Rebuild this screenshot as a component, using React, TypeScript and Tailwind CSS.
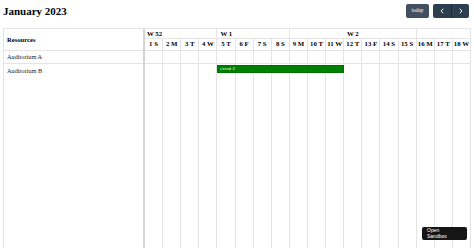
import { ChevronLeft, ChevronRight } from "lucide-react";

const days = [
  "1 S", "2 M", "3 T", "4 W", "5 T", "6 F", "7 S", "8 S", "9 M",
  "10 T", "11 W", "12 T", "13 F", "14 S", "15 S", "16 M", "17 T", "18 W",
];

function DayCells() {
  return (
    <div className="absolute inset-0 grid grid-cols-[repeat(18,minmax(0,1fr))]">
      {days.map((d) => (
        <div key={d} className="border-r border-[#e4e4e4]" />
      ))}
    </div>
  );
}

export default function App() {
  return (
    <div className="relative w-[474px] h-[248px] overflow-hidden bg-white flex flex-col font-['Liberation_Serif',serif] text-black">
      {/* toolbar */}
      <div className="h-[28px] flex justify-between items-start pt-[4px] px-[3px] shrink-0">
        <h2 className="text-[11px] font-bold leading-[14px]">January 2023</h2>
        <div className="flex gap-[4px] mr-[2px]">
          <button className="h-[14px] w-[23px] rounded-[2px] bg-[#2c3e50] text-white text-[5.5px] leading-none opacity-90">
            today
          </button>
          <div className="flex h-[14px] rounded-[2px] overflow-hidden bg-[#2c3e50]">
            <button className="w-[18px] flex items-center justify-center text-white">
              <ChevronLeft size={8} strokeWidth={3} />
            </button>
            <button className="w-[18px] flex items-center justify-center text-white border-l border-[#1e2b37]">
              <ChevronRight size={8} strokeWidth={3} />
            </button>
          </div>
        </div>
      </div>

      {/* timeline table */}
      <div className="ml-[3px] w-[468px] flex-1 flex flex-col border-l border-t border-[#e4e4e4]">
        {/* header */}
        <div className="flex h-[22px] shrink-0">
          <div className="w-[139px] border-b border-[#e4e4e4] flex items-center pl-[3px] text-[6.6px] font-bold">
            Resources
          </div>
          <div className="w-[2px] bg-[#d4d4d4]" />
          <div className="flex-1 flex flex-col">
            <div className="h-[10px] grid grid-cols-[repeat(18,minmax(0,1fr))] border-b border-[#e4e4e4] text-[6.8px] font-bold leading-[9px]">
              <div className="col-span-4 border-r border-[#e4e4e4] pl-[2px]">W 52</div>
              <div className="col-span-4 border-r border-[#e4e4e4] pl-[3px]">W 1</div>
              <div className="col-span-7 border-r border-[#e4e4e4] text-center">W 2</div>
              <div className="col-span-3 border-r border-[#e4e4e4]" />
            </div>
            <div className="flex-1 grid grid-cols-[repeat(18,minmax(0,1fr))] border-b border-[#e4e4e4] text-[6.8px] font-bold">
              {days.map((d) => (
                <div key={d} className="border-r border-[#e4e4e4] flex items-center justify-center whitespace-nowrap">
                  {d}
                </div>
              ))}
            </div>
          </div>
        </div>

        {/* Auditorium A */}
        <div className="flex h-[13px] shrink-0">
          <div className="w-[139px] border-b border-[#e4e4e4] flex items-center pl-[3px] text-[6.3px] text-[#222]">
            Auditorium A
          </div>
          <div className="w-[2px] bg-[#d4d4d4]" />
          <div className="flex-1 relative border-b border-[#e4e4e4]">
            <DayCells />
          </div>
        </div>

        {/* Auditorium B */}
        <div className="flex h-[14px] shrink-0">
          <div className="w-[139px] flex items-center pl-[3px] text-[6.3px] text-[#222]">
            Auditorium B
          </div>
          <div className="w-[2px] bg-[#d4d4d4]" />
          <div className="flex-1 relative">
            <DayCells />
            <div className="absolute top-[1px] h-[8px] left-[22.2%] w-[38.9%] bg-[#008000] border border-[#007000] text-white text-[5px] leading-[6px] pl-[2px]">
              event 2
            </div>
          </div>
        </div>

        {/* filler */}
        <div className="flex flex-1">
          <div className="w-[139px]" />
          <div className="w-[2px] bg-[#d4d4d4]" />
          <div className="flex-1 relative">
            <DayCells />
          </div>
        </div>
      </div>

      {/* sandbox badge */}
      <div className="absolute left-[422px] top-[227px] w-[45px] h-[13px] rounded-[2px] bg-[#151515] text-white text-[5px] leading-[5.5px] pl-[5px] pt-[1px] font-['Liberation_Sans',sans-serif]">
        Open
        <br />
        Sandbox
      </div>
    </div>
  );
}
